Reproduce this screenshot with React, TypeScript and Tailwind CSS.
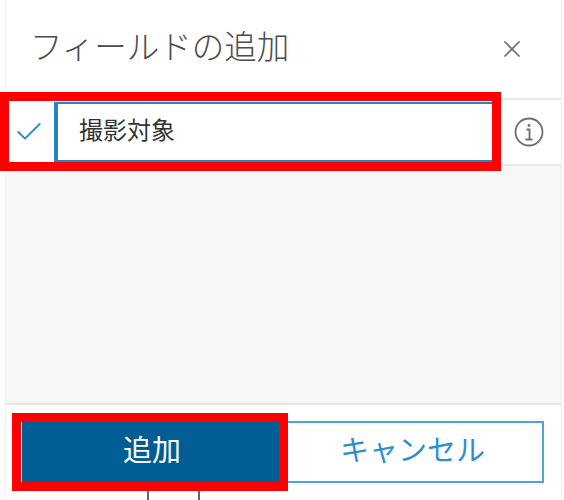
import { X, Check } from 'lucide-react';

const font = { fontFamily: '"Noto Sans CJK JP", "Liberation Sans", sans-serif' };

export default function App() {
  return (
    <div className="relative w-[564px] h-[500px] bg-white overflow-hidden" style={font}>
      <div className="ml-[5px] mr-[2px] h-[500px] border-x border-[#f0f0f0] flex flex-col">
        <div className="h-[98px] flex items-center justify-between pl-[24px] pr-[35px] shrink-0">
          <h1 className="text-[32.5px] font-light text-[#4c4c4c] leading-none pb-[8px]">フィールドの追加</h1>
          <X className="w-[28px] h-[28px] text-[#6e6e6e]" strokeWidth={1.5} />
        </div>

        <div className="h-[68px] shrink-0 flex items-center border-y-2 border-[#e8e8e8]">
          <div className="w-[48px] flex justify-center shrink-0 pr-[3px]">
            <Check className="w-[32px] h-[32px] text-[#2a8fd0]" strokeWidth={1.5} />
          </div>
          <div className="w-[441px] h-[60px] border-2 border-l-4 border-[#1f87c9] flex items-center pl-[21px] text-[24px] text-[#333333] shrink-0">
            <span className="pb-[6px]">撮影対象</span>
          </div>
          <div className="flex-1 flex justify-center pl-[2px] pr-[1px]">
            <svg width="30" height="30" viewBox="0 0 30 30" fill="none" stroke="#6e6e6e" strokeWidth="1.8">
              <circle cx="15" cy="15" r="13.5" />
              <circle cx="15" cy="8.5" r="1.4" fill="#6e6e6e" stroke="none" />
              <path d="M12.5 12.5H15.5V22M11.5 22.5H18.5" />
            </svg>
          </div>
        </div>

        <div className="flex-1 bg-[#f7f7f7]" />

        <div className="h-[97px] shrink-0 border-t-2 border-[#e6e6e6] flex items-start pl-[16px] pt-[16px]">
          <button className="w-[258px] h-[62px] bg-[#005e95] text-white text-[29px] pb-[6px] pl-[2px] flex items-center justify-center">追加</button>
          <button className="w-[264px] h-[62px] border-2 border-l-0 border-[#4da3db] text-[#2f8fce] text-[29px] pb-[6px] pl-[3px] flex items-center justify-center">キャンセル</button>
        </div>
      </div>

      {/* 赤枠の注釈 */}
      <div className="absolute left-0 top-[92px] w-[501px] h-[79px] border-[9px] border-[#ff0000]" />
      <div className="absolute left-[12px] top-[413px] w-[276px] h-[78px] border-[9px] border-[#ff0000]" />
      <div className="absolute left-[147px] top-[491px] w-[53px] h-[11px] border-x-2 border-[#666666]" />
    </div>
  );
}
